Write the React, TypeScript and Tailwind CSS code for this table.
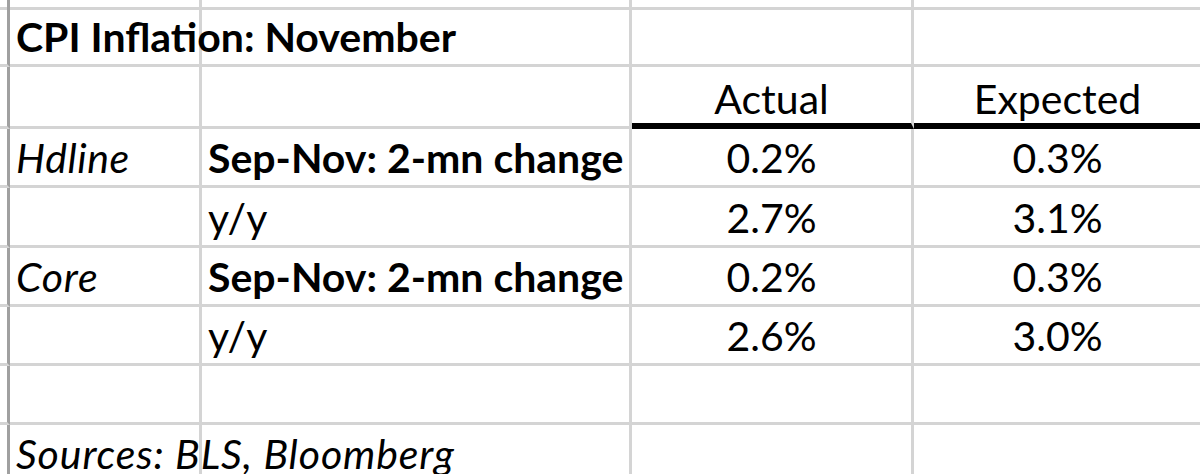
import React from 'react'

// Excel-like sheet: a strip for the row headers, then columns A-D
const COLS = ['w-[10px]', 'w-[192px]', 'w-[430px]', 'w-[282px]', 'w-[290px]']

type Row = {
  h: string
  cells: React.ReactNode[]
  underline?: boolean
}

const ROWS: Row[] = [
  { h: 'h-[7px]', cells: [null, null, null, null, null] },
  {
    h: 'h-[60px]',
    cells: [null, <span className="font-bold">CPI Inflation: November</span>, null, null, null],
  },
  { h: 'h-[62px]', cells: [null, null, null, 'Actual', 'Expected'], underline: true },
  {
    h: 'h-[59px]',
    cells: [
      null,
      <span className="italic tracking-[0.6px]">Hdline</span>,
      <span className="font-bold">Sep-Nov: 2-mn change</span>,
      '0.2%',
      '0.3%',
    ],
  },
  { h: 'h-[60px]', cells: [null, null, 'y/y', '2.7%', '3.1%'] },
  {
    h: 'h-[59px]',
    cells: [
      null,
      <span className="italic tracking-[0.8px]">Core</span>,
      <span className="font-bold">Sep-Nov: 2-mn change</span>,
      '0.2%',
      '0.3%',
    ],
  },
  { h: 'h-[59px]', cells: [null, null, 'y/y', '2.6%', '3.0%'] },
  { h: 'h-[59px]', cells: [null, null, null, null, null] },
  {
    h: 'h-[59px]',
    cells: [null, <span className="italic whitespace-nowrap tracking-[0.9px]">Sources: BLS, Bloomberg</span>, null, null, null],
  },
]

function Cell({ col, underline, children }: { col: number; underline?: boolean; children: React.ReactNode }) {
  const numeric = col >= 3
  const border =
    col === 0
      ? 'border-r-[3px] border-r-[#a0a0a0] border-b-[3px] border-b-[#d4d4d4]'
      : underline && numeric
        ? 'border-r-[3px] border-r-[#d4d4d4] border-b-[6px] border-b-black'
        : 'border-r-[3px] border-r-[#d4d4d4] border-b-[3px] border-b-[#d4d4d4]'
  return (
    <div
      className={`${COLS[col]} shrink-0 h-full box-border flex items-end ${border} ${
        numeric ? 'justify-center' : 'pl-[6px]'
      } ${underline && numeric ? 'pb-[4px]' : 'pb-[7px]'}`}
    >
      {children !== null && <div className="leading-none whitespace-nowrap overflow-visible">{children}</div>}
    </div>
  )
}

export default function App() {
  return (
    <div className="w-[1200px] h-[474px] overflow-hidden bg-white text-black font-['Lato',sans-serif] text-[41px]">
      {ROWS.map((row, i) => (
        <div key={i} className={`flex ${row.h}`}>
          {row.cells.map((c, j) => (
            <Cell key={j} col={j} underline={row.underline}>
              {c}
            </Cell>
          ))}
        </div>
      ))}
    </div>
  )
}
